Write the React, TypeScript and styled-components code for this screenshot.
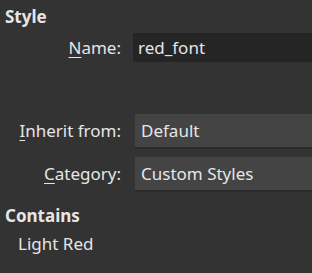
import styled, { createGlobalStyle } from 'styled-components';

const Global = createGlobalStyle`
  html, body { margin: 0; padding: 0; background: #333333; }
  body {
    width: 312px;
    height: 273px;
    overflow: hidden;
    font-family: "Noto Sans", "Open Sans", sans-serif;
    font-size: 17px;
    color: #e6e6e6;
  }
`;

const Page = styled.div`
  display: flex;
  flex-direction: column;
  padding-top: 6px;
`;

const Heading = styled.div`
  font-weight: 700;
  padding-left: 5px;
  height: 22px;
  line-height: 22px;
`;

const Form = styled.div`
  display: grid;
  grid-template-columns: 121px 1fr;
  column-gap: 12px;
  align-items: center;
`;

const Label = styled.label`
  text-align: right;
  white-space: nowrap;
  u { text-decoration-thickness: 1px; text-underline-offset: 3px; }
`;

const Input = styled.div`
  height: 29px;
  line-height: 29px;
  background: #252525;
  padding-left: 5px;
`;

const Select = styled.div`
  height: 33px;
  line-height: 33px;
  margin-left: 2px;
  padding-left: 6px;
  background: #444444;
  box-shadow: 0 2px 0 #2b2b2b;
`;

const Spacer = styled.div<{ $h: number }>`
  height: ${({ $h }) => $h}px;
  grid-column: 1 / -1;
`;

const Item = styled.div`
  padding-left: 18px;
  padding-top: 3px;
  height: 28px;
  line-height: 28px;
`;

export default function App() {
  return (
    <Page>
      <Global />
      <Heading>Style</Heading>
      <Form>
        <Spacer $h={5} />
        <Label><u>N</u>ame:</Label>
        <Input>red_font</Input>
        <Spacer $h={52} />
        <Label><u>I</u>nherit from:</Label>
        <Select>Default</Select>
        <Spacer $h={10} />
        <Label><u>C</u>ategory:</Label>
        <Select>Custom Styles</Select>
      </Form>
      <Spacer $h={15} />
      <Heading>Contains</Heading>
      <Item>Light Red</Item>
    </Page>
  );
}
